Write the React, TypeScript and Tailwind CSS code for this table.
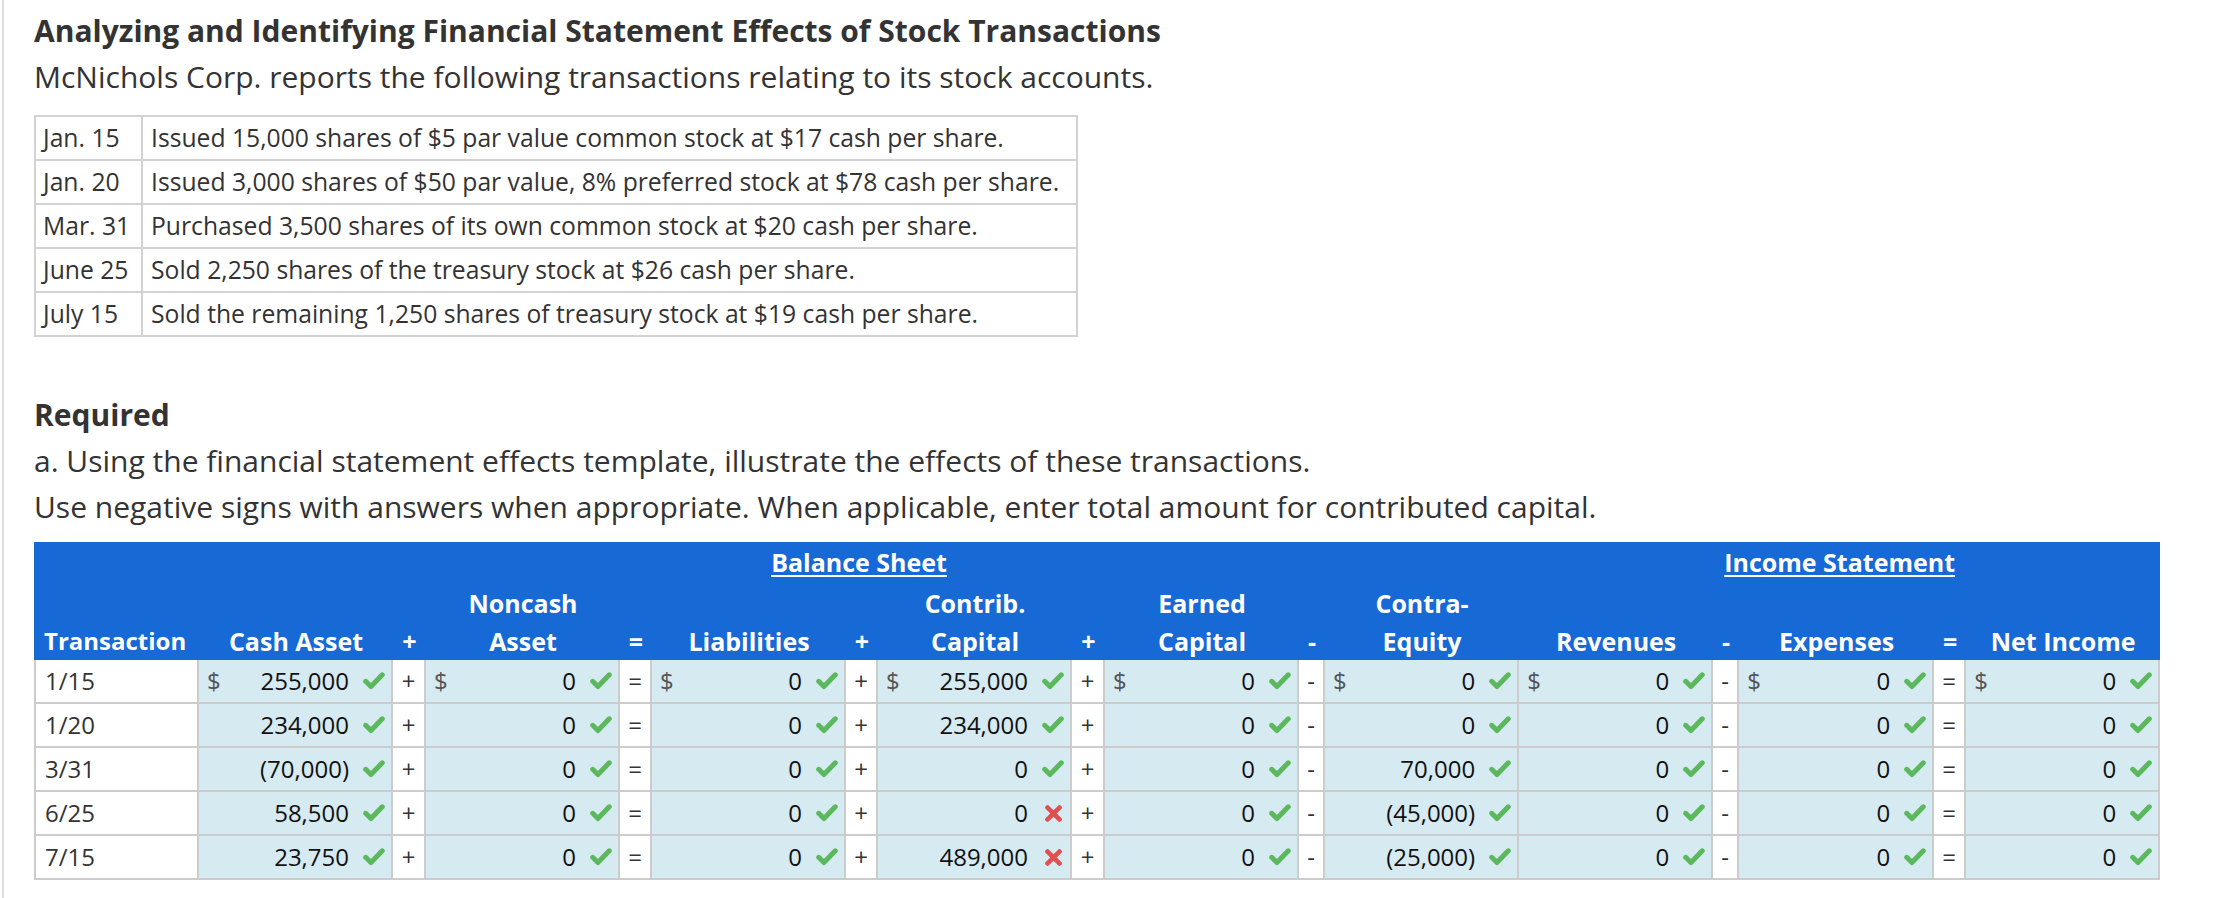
import React from 'react';

type Val = [string, boolean];

interface Row {
  date: string;
  cash: Val;
  noncash: Val;
  liab: Val;
  contrib: Val;
  earned: Val;
  contra: Val;
  rev: Val;
  exp: Val;
  ni: Val;
}

const events = [
  ['Jan. 15', 'Issued 15,000 shares of $5 par value common stock at $17 cash per share.'],
  ['Jan. 20', 'Issued 3,000 shares of $50 par value, 8% preferred stock at $78 cash per share.'],
  ['Mar. 31', 'Purchased 3,500 shares of its own common stock at $20 cash per share.'],
  ['June 25', 'Sold 2,250 shares of the treasury stock at $26 cash per share.'],
  ['July 15', 'Sold the remaining 1,250 shares of treasury stock at $19 cash per share.'],
];

const zero: Val = ['0', true];

const rows: Row[] = [
  { date: '1/15', cash: ['255,000', true], noncash: zero, liab: zero, contrib: ['255,000', true], earned: zero, contra: zero, rev: zero, exp: zero, ni: zero },
  { date: '1/20', cash: ['234,000', true], noncash: zero, liab: zero, contrib: ['234,000', true], earned: zero, contra: zero, rev: zero, exp: zero, ni: zero },
  { date: '3/31', cash: ['(70,000)', true], noncash: zero, liab: zero, contrib: zero, earned: zero, contra: ['70,000', true], rev: zero, exp: zero, ni: zero },
  { date: '6/25', cash: ['58,500', true], noncash: zero, liab: zero, contrib: ['0', false], earned: zero, contra: ['(45,000)', true], rev: zero, exp: zero, ni: zero },
  { date: '7/15', cash: ['23,750', true], noncash: zero, liab: zero, contrib: ['489,000', false], earned: zero, contra: ['(25,000)', true], rev: zero, exp: zero, ni: zero },
];

const Check = () => (
  <svg width="22" height="18" viewBox="0 0 21 17" className="block">
    <polyline points="2.6,8.8 7.6,13.8 18.4,2.6" fill="none" stroke="#5cb85c" strokeWidth="4.8" strokeLinecap="round" strokeLinejoin="round" />
  </svg>
);

const Cross = () => (
  <svg width="17" height="17" viewBox="0 80 352 352" className="block">
    <path
      fill="#e05050"
      d="M242.72 256l100.07-100.07c12.28-12.28 12.28-32.19 0-44.48l-22.24-22.24c-12.28-12.28-32.19-12.28-44.48 0L176 189.28 75.93 89.21c-12.28-12.28-32.19-12.28-44.48 0L9.21 111.45c-12.28 12.28-12.28 32.19 0 44.48L109.28 256 9.21 356.07c-12.28 12.28-12.28 32.19 0 44.48l22.24 22.24c12.28 12.28 32.2 12.28 44.48 0L176 322.72l100.07 100.07c12.28 12.28 32.2 12.28 44.48 0l22.24-22.24c12.28-12.28 12.28-32.19 0-44.48L242.72 256z"
    />
  </svg>
);

const ValueCell: React.FC<{ val: Val; dollar: boolean }> = ({ val, dollar }) => (
  <td className="bg-[#d6eaf1] border-r-2 border-b-2 border-[#cccccc] p-0 pl-[8px] pr-[6px]">
    <div className="flex items-center">
      <span className="text-[#555]">{dollar ? '$' : ''}</span>
      <span className="ml-auto text-[#111]">{val[0]}</span>
      <span className="ml-[14px] w-[22px] flex justify-center">{val[1] ? <Check /> : <Cross />}</span>
    </div>
  </td>
);

const OpCell: React.FC<{ op: string }> = ({ op }) => (
  <td className="bg-white border-r-2 border-b-2 border-[#cccccc] p-0 text-center text-[#333]">{op}</td>
);

const App: React.FC = () => {
  return (
    <div className="min-h-screen bg-white pl-[2px] font-['Open_Sans',sans-serif]">
      <div className="min-h-screen border-l-2 border-[#dddddd] pl-[30px] pt-[8px] text-[#333]">
        <h1 className="text-[30px] leading-[46px] font-bold">Analyzing and Identifying Financial Statement Effects of Stock Transactions</h1>
        <p className="text-[30px] leading-[46px]">McNichols Corp. reports the following transactions relating to its stock accounts.</p>

        <table className="mt-[15px] table-fixed border-collapse text-[24.7px] text-[#333]">
          <colgroup>
            <col className="w-[107px]" />
            <col className="w-[935px]" />
          </colgroup>
          <tbody>
            {events.map(([d, t]) => (
              <tr key={d} className="h-[44px]">
                <td className="border-2 border-[#d2d2d2] px-[7px] py-0 whitespace-nowrap">{d}</td>
                <td className="border-2 border-[#d2d2d2] px-[8px] py-0 whitespace-nowrap">{t}</td>
              </tr>
            ))}
          </tbody>
        </table>

        <div className="mt-[55px] text-[30px] leading-[46px]">
          <p className="font-bold">Required</p>
          <p>a. Using the financial statement effects template, illustrate the effects of these transactions.</p>
          <p>Use negative signs with answers when appropriate. When applicable, enter total amount for contributed capital.</p>
        </div>

        <table className="mt-[12px] table-fixed border-separate border-spacing-0 text-[24px] w-[2126px]">
          <colgroup>
            <col className="w-[165px]" />
            <col className="w-[194px]" />
            <col className="w-[33px]" />
            <col className="w-[194px]" />
            <col className="w-[32px]" />
            <col className="w-[194px]" />
            <col className="w-[32px]" />
            <col className="w-[194px]" />
            <col className="w-[33px]" />
            <col className="w-[194px]" />
            <col className="w-[26px]" />
            <col className="w-[194px]" />
            <col className="w-[194px]" />
            <col className="w-[26px]" />
            <col className="w-[195px]" />
            <col className="w-[32px]" />
            <col className="w-[194px]" />
          </colgroup>
          <thead className="bg-[#1769d5] text-white font-bold text-[25px]">
            <tr className="h-[42px]">
              <th className="p-0" />
              <th colSpan={11} className="p-0 text-center align-middle">
                <span className="underline underline-offset-[3px] decoration-2">Balance Sheet</span>
              </th>
              <th colSpan={5} className="p-0 text-center align-middle">
                <span className="underline underline-offset-[3px] decoration-2">Income Statement</span>
              </th>
            </tr>
            <tr className="leading-[38px] align-bottom">
              <th className="p-0 pl-[10px] text-left font-bold text-[24px]">Transaction</th>
              <th className="p-0 text-center">Cash Asset</th>
              <th className="p-0 text-center">+</th>
              <th className="p-0 text-center">Noncash<br />Asset</th>
              <th className="p-0 text-center">=</th>
              <th className="p-0 text-center">Liabilities</th>
              <th className="p-0 text-center">+</th>
              <th className="p-0 text-center">Contrib.<br />Capital</th>
              <th className="p-0 text-center">+</th>
              <th className="p-0 text-center">Earned<br />Capital</th>
              <th className="p-0 text-center">-</th>
              <th className="p-0 text-center">Contra-<br />Equity</th>
              <th className="p-0 text-center">Revenues</th>
              <th className="p-0 text-center">-</th>
              <th className="p-0 text-center">Expenses</th>
              <th className="p-0 text-center">=</th>
              <th className="p-0 text-center">Net Income</th>
            </tr>
          </thead>
          <tbody>
            {rows.map((r, i) => {
              const d = i === 0;
              return (
                <tr key={r.date} className="h-[44px]">
                  <td className="bg-white border-l-2 border-r-2 border-b-2 border-[#cccccc] p-0 pl-[9px] text-[#333]">{r.date}</td>
                  <ValueCell val={r.cash} dollar={d} />
                  <OpCell op="+" />
                  <ValueCell val={r.noncash} dollar={d} />
                  <OpCell op="=" />
                  <ValueCell val={r.liab} dollar={d} />
                  <OpCell op="+" />
                  <ValueCell val={r.contrib} dollar={d} />
                  <OpCell op="+" />
                  <ValueCell val={r.earned} dollar={d} />
                  <OpCell op="-" />
                  <ValueCell val={r.contra} dollar={d} />
                  <ValueCell val={r.rev} dollar={d} />
                  <OpCell op="-" />
                  <ValueCell val={r.exp} dollar={d} />
                  <OpCell op="=" />
                  <ValueCell val={r.ni} dollar={d} />
                </tr>
              );
            })}
          </tbody>
        </table>
      </div>
    </div>
  );
};

export default App;
